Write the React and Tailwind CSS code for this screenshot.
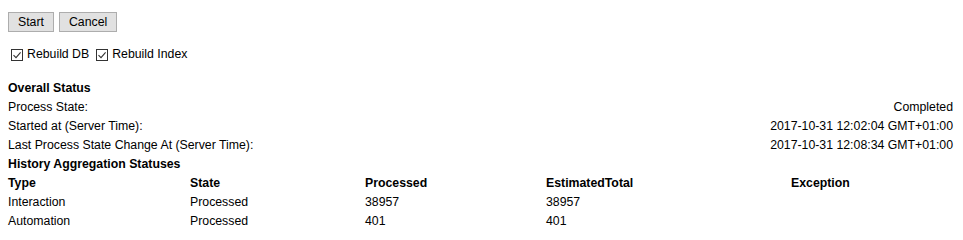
import React from "react";

function Check({ label }) {
  return (
    <label className="flex items-center">
      <span className="flex h-[12px] w-[12px] items-center justify-center border border-[#333] bg-white">
        <svg viewBox="0 0 10 10" className="h-[10px] w-[10px]" fill="none" stroke="#333" strokeWidth="1.1">
          <path d="M1.5 5.2 L4 7.6 L8.6 2.4" />
        </svg>
      </span>
      <span className="ml-[4px]">{label}</span>
    </label>
  );
}

const rows = [
  ["Interaction", "Processed", "38957", "38957", ""],
  ["Automation", "Processed", "401", "401", ""],
];

export default function App() {
  return (
    <div className="h-[236px] w-full bg-white pl-2 pr-[10px] pt-3 font-['Liberation_Sans',Arial,sans-serif] text-[12.3px] leading-[19px] text-black">
      {/* Actions */}
      <div className="flex gap-[5px]">
        <button className="h-[20px] border border-[#adadad] bg-[#e1e1e1] px-[9px] leading-[18px]">Start</button>
        <button className="h-[20px] border border-[#adadad] bg-[#e1e1e1] px-[9px] leading-[18px]">Cancel</button>
      </div>

      <div className="mt-[16px] flex h-[13px] items-center gap-[7px] pl-[3px]">
        <Check label="Rebuild DB" />
        <Check label="Rebuild Index" />
      </div>

      {/* Status */}
      <div className="mt-[18px]">
        <div className="font-bold">Overall Status</div>
        <div className="flex justify-between">
          <span>Process State:</span>
          <span>Completed</span>
        </div>
        <div className="flex justify-between">
          <span>Started at (Server Time):</span>
          <span>2017-10-31 12:02:04 GMT+01:00</span>
        </div>
        <div className="flex justify-between">
          <span>Last Process State Change At (Server Time):</span>
          <span>2017-10-31 12:08:34 GMT+01:00</span>
        </div>
        <div className="font-bold">History Aggregation Statuses</div>
        <div className="grid grid-cols-[182px_175px_181px_245px_1fr] font-bold">
          <span>Type</span>
          <span>State</span>
          <span>Processed</span>
          <span>EstimatedTotal</span>
          <span>Exception</span>
        </div>
        {rows.map((r) => (
          <div key={r[0]} className="grid grid-cols-[182px_175px_181px_245px_1fr]">
            {r.map((c, i) => (
              <span key={i}>{c}</span>
            ))}
          </div>
        ))}
      </div>
    </div>
  );
}
